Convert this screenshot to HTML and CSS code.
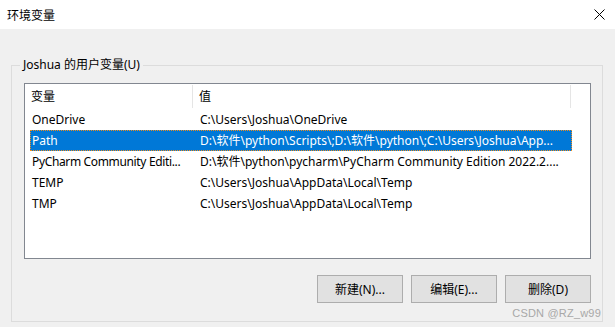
FILE: index.html
```html
<!DOCTYPE html>
<html lang="zh-CN">
<head>
    <meta charset="UTF-8">
    <title>环境变量</title>
    <link rel="stylesheet" href="styles.css">
</head>
<body>
    <div class="window">
        <div class="titlebar">
            <span class="title">环境变量</span>
            <svg class="close" width="11" height="11" viewBox="0 0 11 11">
                <path d="M0.5 0.5 L10.5 10.5 M10.5 0.5 L0.5 10.5" stroke="#000" stroke-width="1" fill="none"/>
            </svg>
        </div>
        <div class="content">
            <fieldset class="group">
                <legend>Joshua 的用户变量(U)</legend>
                <div class="listview">
                    <div class="list-header">
                        <div class="hcell name">变量</div>
                        <div class="hcell value">值</div>
                    </div>
                    <div class="row">
                        <div class="cell name">OneDrive</div>
                        <div class="cell value">C:\Users\Joshua\OneDrive</div>
                    </div>
                    <div class="row selected">
                        <div class="cell name">Path</div>
                        <div class="cell value">D:\软件\python\Scripts\;D:\软件\python\;C:\Users\Joshua\App...</div>
                    </div>
                    <div class="row">
                        <div class="cell name tight">PyCharm Community Editi...</div>
                        <div class="cell value">D:\软件\python\pycharm\PyCharm Community Edition 2022.2....</div>
                    </div>
                    <div class="row">
                        <div class="cell name">TEMP</div>
                        <div class="cell value">C:\Users\Joshua\AppData\Local\Temp</div>
                    </div>
                    <div class="row">
                        <div class="cell name">TMP</div>
                        <div class="cell value">C:\Users\Joshua\AppData\Local\Temp</div>
                    </div>
                </div>
                <div class="buttons">
                    <button>新建(N)...</button>
                    <button>编辑(E)...</button>
                    <button>删除(D)</button>
                </div>
            </fieldset>
        </div>
        <div class="watermark">CSDN @RZ_w99</div>
    </div>
</body>
</html>
```

FILE: styles.css
```css
body {
    margin: 0;
    background-color: #f0f0f0;
    font-family: 'Noto Sans', 'Noto Sans CJK SC', sans-serif;
    font-size: 12px;
    color: #000;
}
.window {
    position: relative;
    width: 615px;
    height: 327px;
    overflow: hidden;
}
.titlebar {
    height: 29px;
    background: white;
    display: flex;
    align-items: center;
    justify-content: space-between;
    padding: 0 10px 0 7px;
}
.title {
    font-size: 12px;
    margin-top: 1px;
}
.content {
    padding: 28px 12px 0 11px;
}
.group {
    margin: 0;
    padding: 0 11px 18px 12px;
    border: 1px solid #dcdcdc;
}
.group legend {
    margin-left: -4px;
    padding: 0 3px;
    line-height: 16px;
}
.listview {
    margin-top: 10px;
    height: 174px;
    background: white;
    border: 1px solid #828790;
    overflow: hidden;
}
.list-header {
    display: flex;
    height: 25px;
    align-items: center;
}
.hcell {
    height: 23px;
    line-height: 23px;
    border-right: 1px solid #e5e5e5;
}
.hcell.name {
    width: 161px;
    padding-left: 6px;
}
.hcell.value {
    width: 371px;
    padding-left: 6px;
}
.row {
    display: flex;
    height: 21px;
    line-height: 21px;
    margin-left: 5px;
    width: 542px;
    white-space: nowrap;
}
.cell {
    overflow: hidden;
}
.cell.name {
    width: 166px;
    padding-left: 2px;
}
.cell.tight {
    letter-spacing: -0.35px;
}
.cell.value {
    flex: 1;
    padding-left: 2px;
}
.row.selected {
    background-color: #0078d7;
    color: white;
    outline: 1px dotted #f08c1c;
    outline-offset: -1px;
}
.buttons {
    display: flex;
    justify-content: flex-end;
    gap: 8px;
    margin-top: 16px;
}
button {
    width: 86px;
    height: 28px;
    background-color: #e1e1e1;
    border: 1px solid #adadad;
    font-family: inherit;
    font-size: 12px;
    color: #000;
    padding: 0;
}
.watermark {
    position: absolute;
    right: 14px;
    bottom: 8px;
    color: #a8a8a8;
    font-family: 'Liberation Sans', sans-serif;
    font-size: 11px;
    letter-spacing: 0.2px;
}
```
